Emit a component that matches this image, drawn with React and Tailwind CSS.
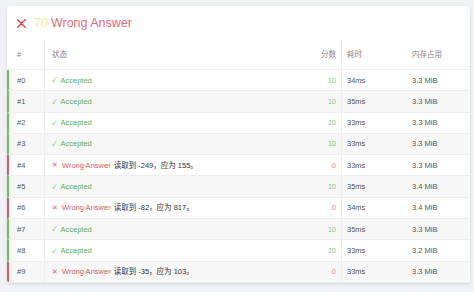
import React from "react";

const rows = [
  { id: 0, ok: true, score: 10, time: "34ms", mem: "3.3 MiB" },
  { id: 1, ok: true, score: 10, time: "35ms", mem: "3.3 MiB" },
  { id: 2, ok: true, score: 10, time: "33ms", mem: "3.3 MiB" },
  { id: 3, ok: true, score: 10, time: "33ms", mem: "3.3 MiB" },
  { id: 4, ok: false, msg: "读取到 -249，应为 155。", score: 0, time: "33ms", mem: "3.3 MiB" },
  { id: 5, ok: true, score: 10, time: "35ms", mem: "3.4 MiB" },
  { id: 6, ok: false, msg: "读取到 -82，应为 817。", score: 0, time: "34ms", mem: "3.4 MiB" },
  { id: 7, ok: true, score: 10, time: "35ms", mem: "3.3 MiB" },
  { id: 8, ok: true, score: 10, time: "33ms", mem: "3.2 MiB" },
  { id: 9, ok: false, msg: "读取到 -35，应为 103。", score: 0, time: "33ms", mem: "3.3 MiB" },
];

export default function App() {
  return (
    <div
      className="w-[474px] h-[292px] bg-[#eff1f4] pt-[6px] pl-[7px] overflow-hidden"
      style={{ fontFamily: '"Liberation Sans", "Noto Sans CJK SC", sans-serif' }}
    >
      <div className="w-[463px] bg-white rounded-[4px] shadow-[0_1px_3px_rgba(0,0,0,0.12)] overflow-hidden">
        <div className="h-[34px] flex items-center pl-[10px] text-[12.5px]">
          <svg width="9" height="9" viewBox="0 0 9 9" className="mr-[8px]">
            <path d="M0.8 0.8 L8.2 8.2 M8.2 0.8 L0.8 8.2" stroke="#db4756" strokeWidth="1.5" strokeLinecap="round" />
          </svg>
          <span className="text-[#f2ea9c] mr-[3px]">70</span>
          <span className="text-[#e36b78]">Wrong Answer</span>
        </div>
        <div className="flex h-[30px] items-center text-[7.5px] text-[#888] border-b border-[#eeeeee]">
          <div className="w-[38px] h-full flex items-center pl-[10px] border-r border-[#eeeeee]">#</div>
          <div className="flex-1 pl-[7px]">状态</div>
          <div className="w-[40px] h-full flex items-center justify-end pr-[5px] border-r border-[#eeeeee]">分数</div>
          <div className="w-[63px] pl-[5px]">耗时</div>
          <div className="w-[65px] pl-[7px]">内存占用</div>
        </div>
        {rows.map((r) => (
          <div
            key={r.id}
            className={`flex h-[21.3px] items-center text-[7.5px] text-[#555] border-b border-[#eeeeee] border-l-2 ${
              r.ok ? "border-l-[#6cc45c]" : "border-l-[#dc5a66]"
            } ${r.id % 2 === 1 ? "bg-[#f7f7f7]" : "bg-white"}`}
          >
            <div className="w-[36px] h-full flex items-center pl-[8px] border-r border-[#eeeeee]">#{r.id}</div>
            <div className="flex-1 pl-[7px] flex items-center whitespace-nowrap">
              {r.ok ? (
                <>
                  <span className="text-[#6cb35c] mr-[4px] text-[6.5px]">✓</span>
                  <span className="text-[#5fae56]">Accepted</span>
                </>
              ) : (
                <>
                  <span className="text-[#dc5a66] mr-[4px] text-[6.5px]">✕</span>
                  <span className="text-[#dc5a66] mr-[3px]">Wrong Answer</span>
                  <span className="text-[#333]">{r.msg}</span>
                </>
              )}
            </div>
            <div
              className={`w-[40px] h-full flex items-center justify-end pr-[5px] border-r border-[#eeeeee] ${
                r.ok ? "text-[#8bc47e]" : "text-[#e08a94]"
              }`}
            >
              {r.score}
            </div>
            <div className="w-[63px] pl-[5px]">{r.time}</div>
            <div className="w-[65px] pl-[7px]">{r.mem}</div>
          </div>
        ))}
      </div>
    </div>
  );
}
